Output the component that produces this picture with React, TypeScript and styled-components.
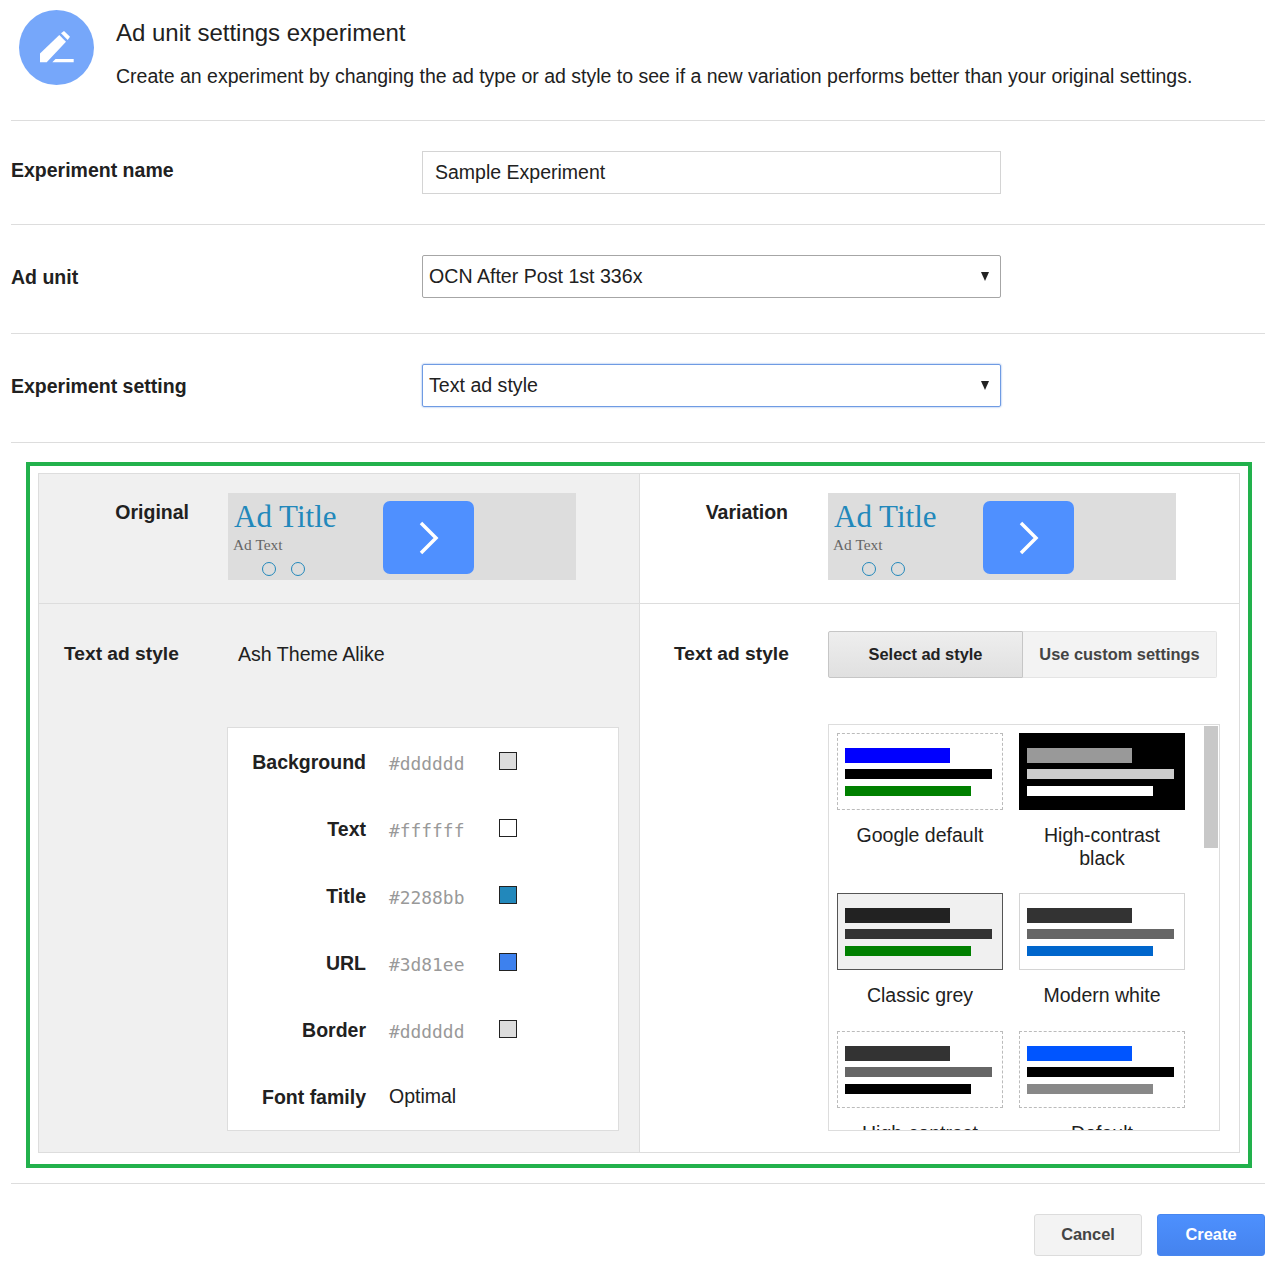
import styled, { createGlobalStyle } from "styled-components";

const GlobalStyle = createGlobalStyle`
    html, body {
        margin: 0;
        padding: 0;
        background: #fff;
    }

    body {
        font-family: "Liberation Sans", Arial, sans-serif;
        color: #212121;
    }
`;

const Page = styled.div`
    box-sizing: border-box;
    width: 1274px;
    height: 1265px;
    padding: 10px 9px 0 11px;
    overflow: hidden;
`;

const Header = styled.header`
    display: flex;
    gap: 22px;
    height: 110px;
    padding-left: 8px;
    border-bottom: 1px solid #ddd;
`;

const HeaderText = styled.div`
    padding-top: 8px;
`;

const Title = styled.div`
    font-size: 24px;
    line-height: 30px;
`;

const Subtitle = styled.div`
    margin-top: 16px;
    font-size: 19.5px;
    line-height: 24px;
`;

const Row = styled.div<{ $height: number }>`
    box-sizing: border-box;
    display: grid;
    grid-template-columns: 411px 579px;
    align-items: start;
    height: ${(p) => p.$height}px;
    padding-top: 30px;
    border-bottom: 1px solid #ddd;
`;

const RowLabel = styled.label<{ $top: number }>`
    margin-top: ${(p) => p.$top}px;
    font-size: 19.5px;
    line-height: 23px;
    font-weight: bold;
`;

const TextField = styled.div`
    box-sizing: border-box;
    height: 43px;
    padding: 0 12px;
    border: 1px solid #d4d4d4;
    font-size: 19.5px;
    line-height: 41px;
`;

const Select = styled.div<{ $focused?: boolean }>`
    box-sizing: border-box;
    display: flex;
    align-items: center;
    justify-content: space-between;
    height: 43px;
    padding: 0 11px 0 6px;
    border: 1px solid ${(p) => (p.$focused ? "#6f9be3" : "#a6a6a6")};
    border-radius: 2px;
    box-shadow: ${(p) => (p.$focused ? "0 0 2px #6f9be3" : "none")};
    font-size: 19.6px;
`;

const Caret = styled.span`
    width: 0;
    height: 0;
    border-left: 4px solid transparent;
    border-right: 4px solid transparent;
    border-top: 9px solid #222;
`;

const GreenFrame = styled.section`
    box-sizing: border-box;
    width: 1226px;
    height: 706px;
    margin: 19px 0 0 15px;
    padding: 7px 8px 11px;
    border: 4px solid #22b14c;
`;

const Table = styled.div`
    box-sizing: border-box;
    display: grid;
    grid-template-columns: 601px 1fr;
    grid-template-rows: 130px 548px;
    height: 680px;
    border: 1px solid #ddd;
`;

const Cell = styled.div<{ $shaded?: boolean; $top?: boolean }>`
    box-sizing: border-box;
    background: ${(p) => (p.$shaded ? "#f0f0f0" : "#fff")};
    border-right: ${(p) => (p.$shaded ? "1px solid #ddd" : "none")};
    border-bottom: ${(p) => (p.$top ? "1px solid #ddd" : "none")};
`;

const PreviewCell = styled(Cell)<{ $labelWidth: number; $gap: number }>`
    display: grid;
    grid-template-columns: ${(p) => p.$labelWidth}px 348px;
    column-gap: ${(p) => p.$gap}px;
    align-content: start;
    padding-top: 19px;
`;

const SideLabel = styled.div`
    margin-top: 7px;
    font-size: 19.5px;
    line-height: 24px;
    font-weight: bold;
    text-align: right;
`;

const Preview = styled.div`
    display: flex;
    height: 87px;
    background: #ddd;
`;

const PreviewText = styled.div`
    width: 155px;
    box-sizing: border-box;
    padding: 6px 0 0 6px;
    font-family: "Liberation Serif", serif;
`;

const AdTitle = styled.div`
    font-size: 31px;
    line-height: 36px;
    color: #2288bb;
`;

const AdText = styled.div`
    margin: 1px 0 0 -1px;
    font-size: 15.4px;
    line-height: 18px;
    color: #666;
`;

const Dots = styled.div`
    display: flex;
    gap: 15px;
    margin: 8px 0 0 28px;
`;

const Dot = styled.span`
    box-sizing: border-box;
    width: 14px;
    height: 14px;
    border: 1.5px solid #2288bb;
    border-radius: 50%;
`;

const NextButton = styled.div`
    display: flex;
    align-items: center;
    justify-content: center;
    width: 91px;
    height: 73px;
    margin-top: 8px;
    background: #4f90ff;
    border-radius: 7px;
`;

const LeftSettings = styled(Cell)`
    padding: 27px 20px 0 25px;
`;

const StyleHead = styled.div`
    display: grid;
    grid-template-columns: 115px auto;
    column-gap: 59px;
    font-size: 19.6px;
    line-height: 46px;
`;

const StyleLabel = styled.div`
    font-size: 19.2px;
    font-weight: bold;
    white-space: nowrap;
`;

const ColorTable = styled.div`
    box-sizing: border-box;
    width: 392px;
    height: 404px;
    margin: 50px 0 0 163px;
    border: 1px solid #ddd;
    background: #fff;
`;

const ColorRow = styled.div`
    display: grid;
    grid-template-columns: 138px 110px 18px;
    column-gap: 23px;
    align-items: center;
    height: 67px;
`;

const ColorName = styled.div`
    padding-top: 1px;
    font-size: 19.5px;
    font-weight: bold;
    text-align: right;
`;

const ColorCode = styled.div`
    margin-top: 3px;
    font-family: "DejaVu Sans Mono", monospace;
    font-size: 17.9px;
    color: #999;
`;

const ColorValue = styled.div`
    font-size: 19.5px;
`;

const Swatch = styled.span<{ $color: string }>`
    box-sizing: border-box;
    display: block;
    width: 18px;
    height: 18px;
    margin: 0 0 2px -23px;
    border: 1px solid #222;
    background: ${(p) => p.$color};
`;

const RightSettings = styled(Cell)`
    padding: 27px 0 0 34px;
`;

const RightHead = styled.div`
    display: grid;
    grid-template-columns: 115px auto;
    column-gap: 39px;
    font-size: 19.5px;
    line-height: 46px;
`;

const Segments = styled.div`
    display: flex;
    width: 389px;
    height: 47px;
`;

const Segment = styled.div<{ $active?: boolean }>`
    box-sizing: border-box;
    display: flex;
    align-items: center;
    justify-content: center;
    width: ${(p) => (p.$active ? "195px" : "194px")};
    padding-bottom: 2px;
    border: 1px solid ${(p) => (p.$active ? "#c6c6c6" : "#e4e4e4")};
    border-left-width: ${(p) => (p.$active ? "1px" : "0")};
    border-radius: ${(p) => (p.$active ? "2px 0 0 2px" : "0 2px 2px 0")};
    background: ${(p) => (p.$active ? "linear-gradient(#eeeeee, #e0e0e0)" : "#f3f3f3")};
    color: ${(p) => (p.$active ? "#222" : "#444")};
    font-size: 16.4px;
    font-weight: bold;
`;

const StylePicker = styled.div`
    position: relative;
    box-sizing: border-box;
    width: 392px;
    height: 407px;
    margin: 46px 0 0 154px;
    padding: 8px 0 0 8px;
    border: 1px solid #ddd;
    overflow: hidden;
`;

const ScrollThumb = styled.div`
    position: absolute;
    top: 1px;
    right: 1px;
    width: 14px;
    height: 122px;
    background: #c8c8c8;
`;

const StyleGrid = styled.div`
    display: grid;
    grid-template-columns: 166px 166px;
    grid-template-rows: 137px 115px auto;
    column-gap: 16px;
    row-gap: 23px;
`;

const StyleOption = styled.div`
    text-align: center;
    font-size: 19.5px;
    line-height: 23px;
`;

const Thumb = styled.div<{ $bg: string; $border: string }>`
    box-sizing: border-box;
    display: flex;
    flex-direction: column;
    height: 77px;
    margin-bottom: 14px;
    padding: 14px 0 0 7px;
    background: ${(p) => p.$bg};
    border: ${(p) => p.$border};
`;

const Bar = styled.div<{ $width: number; $height: number; $color: string; $gap: number }>`
    flex: none;
    width: ${(p) => p.$width}px;
    height: ${(p) => p.$height}px;
    margin-bottom: ${(p) => p.$gap}px;
    background: ${(p) => p.$color};
`;

const Footer = styled.footer`
    display: flex;
    justify-content: flex-end;
    gap: 15px;
    margin-top: 15px;
    padding-top: 30px;
    border-top: 1px solid #ddd;
`;

const FooterButton = styled.button<{ $primary?: boolean }>`
    box-sizing: border-box;
    width: 108px;
    height: 42px;
    padding: 0 0 2px;
    border: 1px solid ${(p) => (p.$primary ? "#4786ef" : "#dcdcdc")};
    border-radius: 3px;
    background: ${(p) => (p.$primary ? "linear-gradient(#4d90fe, #4583ee)" : "#f3f3f3")};
    color: ${(p) => (p.$primary ? "#fff" : "#444")};
    font-family: inherit;
    font-size: 16.4px;
    font-weight: bold;
`;

const colors = [
    { name: "Background", code: "#dddddd", swatch: "#dddddd" },
    { name: "Text", code: "#ffffff", swatch: "#ffffff" },
    { name: "Title", code: "#2288bb", swatch: "#2288bb" },
    { name: "URL", code: "#3d81ee", swatch: "#3d81ee" },
    { name: "Border", code: "#dddddd", swatch: "#dddddd" },
];

const styleOptions = [
    { name: "Google default", bg: "#fff", border: "1px dashed #bbb", bars: ["#0000ff", "#000000", "#008000"] },
    { name: "High-contrast black", bg: "#000", border: "1px solid #000", bars: ["#999999", "#cccccc", "#ffffff"] },
    { name: "Classic grey", bg: "#f0f0f0", border: "1px solid #555", bars: ["#222222", "#333333", "#008000"] },
    { name: "Modern white", bg: "#fff", border: "1px solid #d4d4d4", bars: ["#333333", "#666666", "#0066cc"] },
    { name: "High-contrast", bg: "#fff", border: "1px dashed #bbb", bars: ["#333333", "#666666", "#000000"] },
    { name: "Default", bg: "#fff", border: "1px dashed #bbb", bars: ["#0055ff", "#000000", "#888888"] },
];

function PencilBadge() {
    return (
        <svg width="75" height="75" viewBox="0 0 75 75">
            <circle cx="37.5" cy="37.5" r="37.5" fill="#76a7fa" />
            <path d="M21 43.5 40.3 25 47 31.7 27.7 52.3H21Z" fill="#fff" />
            <path d="M42 23.3 45 21 51 26.7 48.7 30Z" fill="#fff" />
            <path d="M36.5 49H54.7V52.3H33.3Z" fill="#fff" />
        </svg>
    );
}

function AdPreview() {
    return (
        <Preview>
            <PreviewText>
                <AdTitle>Ad Title</AdTitle>
                <AdText>Ad Text</AdText>
                <Dots>
                    <Dot />
                    <Dot />
                </Dots>
            </PreviewText>
            <NextButton>
                <svg width="22" height="34" viewBox="0 0 22 34">
                    <path d="M3 2 18 17 3 32" fill="none" stroke="#fff" strokeWidth="3.5" />
                </svg>
            </NextButton>
        </Preview>
    );
}

export default function App() {
    return (
        <Page>
            <GlobalStyle />
            <Header>
                <PencilBadge />
                <HeaderText>
                    <Title>Ad unit settings experiment</Title>
                    <Subtitle>Create an experiment by changing the ad type or ad style to see if a new variation performs better than your original settings.</Subtitle>
                </HeaderText>
            </Header>
            <Row $height={104}>
                <RowLabel $top={8}>Experiment name</RowLabel>
                <TextField>Sample Experiment</TextField>
            </Row>
            <Row $height={109}>
                <RowLabel $top={11}>Ad unit</RowLabel>
                <Select>
                    OCN After Post 1st 336x
                    <Caret />
                </Select>
            </Row>
            <Row $height={109}>
                <RowLabel $top={11}>Experiment setting</RowLabel>
                <Select $focused>
                    Text ad style
                    <Caret />
                </Select>
            </Row>
            <GreenFrame>
                <Table>
                    <PreviewCell $shaded $top $labelWidth={150} $gap={39}>
                        <SideLabel>Original</SideLabel>
                        <AdPreview />
                    </PreviewCell>
                    <PreviewCell $top $labelWidth={148} $gap={40}>
                        <SideLabel>Variation</SideLabel>
                        <AdPreview />
                    </PreviewCell>
                    <LeftSettings $shaded>
                        <StyleHead>
                            <StyleLabel>Text ad style</StyleLabel>
                            <div>Ash Theme Alike</div>
                        </StyleHead>
                        <ColorTable>
                            {colors.map((color) => (
                                <ColorRow key={color.name}>
                                    <ColorName>{color.name}</ColorName>
                                    <ColorCode>{color.code}</ColorCode>
                                    <Swatch $color={color.swatch} />
                                </ColorRow>
                            ))}
                            <ColorRow>
                                <ColorName>Font family</ColorName>
                                <ColorValue>Optimal</ColorValue>
                            </ColorRow>
                        </ColorTable>
                    </LeftSettings>
                    <RightSettings>
                        <RightHead>
                            <StyleLabel>Text ad style</StyleLabel>
                            <Segments>
                                <Segment $active>Select ad style</Segment>
                                <Segment>Use custom settings</Segment>
                            </Segments>
                        </RightHead>
                        <StylePicker>
                            <StyleGrid>
                                {styleOptions.map((option) => (
                                    <StyleOption key={option.name}>
                                        <Thumb $bg={option.bg} $border={option.border}>
                                            <Bar $width={105} $height={15} $gap={6} $color={option.bars[0]} />
                                            <Bar $width={147} $height={10} $gap={7} $color={option.bars[1]} />
                                            <Bar $width={126} $height={10} $gap={0} $color={option.bars[2]} />
                                        </Thumb>
                                        {option.name}
                                    </StyleOption>
                                ))}
                            </StyleGrid>
                            <ScrollThumb />
                        </StylePicker>
                    </RightSettings>
                </Table>
            </GreenFrame>
            <Footer>
                <FooterButton>Cancel</FooterButton>
                <FooterButton $primary>Create</FooterButton>
            </Footer>
        </Page>
    );
}
